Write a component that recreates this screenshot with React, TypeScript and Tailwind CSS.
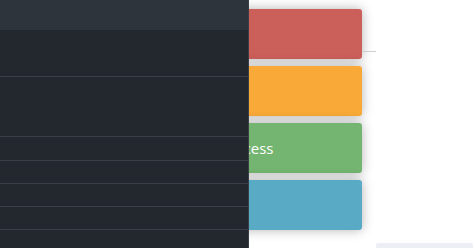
import React from "react";

const rows = ["h-[47px]", "h-[60px]", "h-[24px]", "h-[23px]", "h-[23px]", "h-[23px]"];

const tiles = [
  { color: "bg-[#cb5f5a]", label: "" },
  { color: "bg-[#f8a938]", label: "" },
  { color: "bg-[#73b571]", label: "Success" },
  { color: "bg-[#59aac5]", label: "" },
];

function Sidebar() {
  return (
    <aside className="absolute left-0 top-0 z-10 flex h-full w-[249px] flex-col border-r border-[#3a3f47] bg-[#23272e]">
      <div className="h-[30px] shrink-0 bg-[#2e343b]" />
      {rows.map((h, i) => (
        <div key={i} className={`${h} shrink-0 border-b border-[#3a3f47]`} />
      ))}
    </aside>
  );
}

export default function App() {
  return (
    <div className="relative h-[248px] w-[474px] overflow-hidden bg-white font-['Open_Sans',sans-serif]">
      <Sidebar />
      <div className="flex pl-[200px]">
        <div className="flex w-[162px] shrink-0 flex-col gap-[7px] pt-[9px]">
          {tiles.map((t, i) => (
            <div
              key={i}
              className={`flex h-[50px] items-center rounded-[3px] pl-[19px] text-[15px] text-white shadow-[0_0_12px_rgba(0,0,0,0.3)] ${t.color}`}
            >
              {t.label}
            </div>
          ))}
        </div>
        <div className="flex flex-1 flex-col">
          <div className="h-[52px] w-[14px] border-b border-[#cfcfcf]" />
          <div className="ml-[14px] mt-[191px] mr-[1px] h-[6px] rounded-t-[2px] bg-[#eeeef7]" />
        </div>
      </div>
    </div>
  );
}
